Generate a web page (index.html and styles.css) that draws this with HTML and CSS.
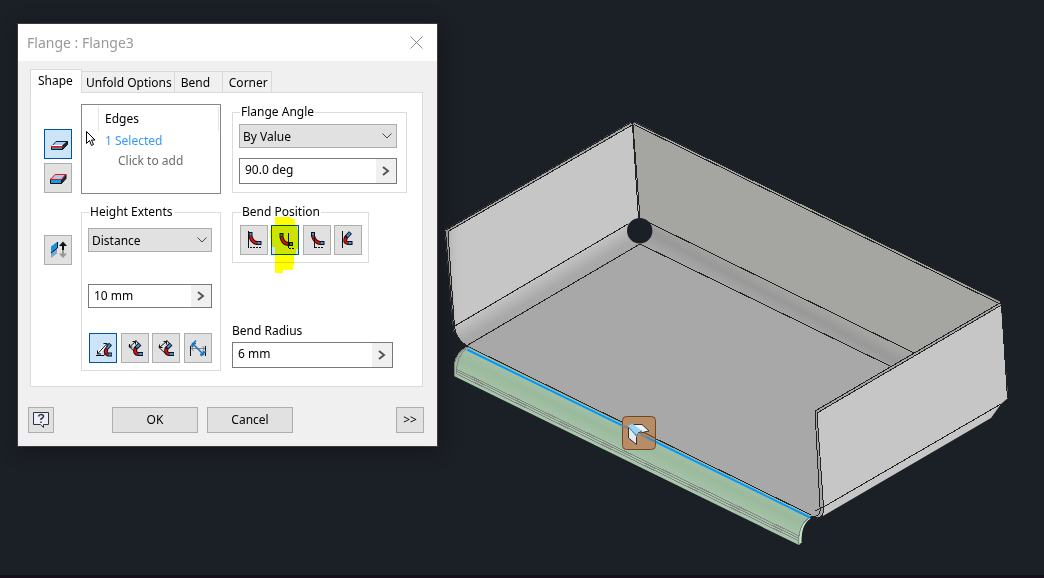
FILE: index.html
```html
<!DOCTYPE html>
<html lang="en">
<head>
  <meta charset="UTF-8">
  <meta name="viewport" content="width=device-width, initial-scale=1.0">
  <title>Flange : Flange3</title>
  <link rel="stylesheet" href="styles.css">
</head>
<body>
  <main class="workspace">

    <!-- sheet metal part -->
    <svg class="model" viewBox="0 0 1044 578" preserveAspectRatio="xMinYMin meet" role="img" aria-label="Sheet metal part">
      <defs>
        <linearGradient id="bendLeft" gradientUnits="userSpaceOnUse" x1="540" y1="274" x2="553" y2="296">
          <stop offset="0" stop-color="#c6c6c6"/>
          <stop offset="0.7" stop-color="#a9a9a9"/>
          <stop offset="1" stop-color="#a8a8a8"/>
        </linearGradient>
        <linearGradient id="bendBack" gradientUnits="userSpaceOnUse" x1="780" y1="287" x2="769" y2="308">
          <stop offset="0" stop-color="#a5a5a2"/>
          <stop offset="0.5" stop-color="#999"/>
          <stop offset="1" stop-color="#a6a6a6"/>
        </linearGradient>
        <linearGradient id="flange" gradientUnits="userSpaceOnUse" x1="640" y1="434" x2="628" y2="459">
          <stop offset="0" stop-color="#a2c0a5"/>
          <stop offset="0.35" stop-color="#9bb99d"/>
          <stop offset="1" stop-color="#a7c7aa"/>
        </linearGradient>
      </defs>

      <!-- floor -->
      <path fill="#a8a8a8" d="M467 346L640 243L892 367L830 403L815 411L821 507L818 518L810 516z"/>
      <!-- back wall and its bend -->
      <path fill="#a5a5a2" d="M633 124L635 122L1001 302L1000 305L914 353L648 222L640 218z"/>
      <path fill="url(#bendBack)" d="M640 218L648 222L914 353L892 367L640 244z"/>
      <!-- left wall and its bend -->
      <path fill="#c6c6c6" d="M445 231L631 122L633 124L640 218L628 224L454 326z"/>
      <path fill="url(#bendLeft)" d="M454 326L628 224L640 218V244L467 346Q455 340 454 326z"/>
      <path fill="#a5a5a5" d="M445 230L631 122L633 124L448 232L455 327Q456 338 467 346Q453 338 453 327z"/>
      <!-- right wall -->
      <path fill="#c6c6c6" d="M816 412L1001 304L1008 398L1001 404L991 418L823 516z"/>
      <path fill="#a5a5a5" d="M815 411L1000 303L1001 305L817 413L823 507V513Q820 519 816 518L810 516L814 515Q820 515 820 507z"/>

      <g class="edge">
        <path d="M446 230L631 122.500L633 124M448 231.500L633 124.500M445.500 231L453.500 327Q454 338 466 346M448 232L454.500 327Q456 339 467 346"/>
        <path d="M635 122.500L1001 301.500L1000 304M634 124.500L999 303.500"/>
        <path d="M454 326.500L628 224M467 345.500L640 244L892 367M648 222L914 353"/>
        <path d="M632.500 125L638.500 218M633 125L640 218"/>
        <path d="M815 411L1000 303M817 413L1001.500 305L1007.500 398M815 411L820 507Q821 515 816 516H810M817 413L823.500 507V512Q822 518 816 518L810 516M815 511L823.500 507L1001 404"/>
        <path d="M467 346L811 515"/>
      </g>
      <circle cx="639.700" cy="230.700" r="12.700" fill="#1b1f26"/>

      <!-- flange preview -->
      <path fill="url(#flange)" d="M468 347L811 516Q800 526 801 543L799 545L454 376V364Q455 354 468 347z"/>
      <path fill="none" stroke="#c5e6c3" stroke-width="2" d="M810 518Q800 524 800.500 543"/>
      <g class="preview-edge">
        <path d="M457 369.500L799 536M457 371.500L799 538.500M457 374L799 541"/>
        <path d="M466 349Q456 357 456.500 374M454.500 376V364Q456 353 467 347M809 518Q798 525 798.500 545"/>
      </g>
      <path class="picked-edge" d="M467 349.500L810 517.500"/>

      <!-- flange marker -->
      <rect x="622.500" y="416.500" width="33" height="33" rx="4" fill="#b68d65" stroke="#744722"/>
      <path stroke="#8b8075" stroke-width="2" d="M622 425.500L630 429M641 434.500L648 438"/>
      <path stroke="#338fd2" stroke-width="2" d="M647 437.500L655 441.500"/>
      <path stroke="#47372b" d="M643 432L655 438"/>
      <path fill="#f4f4f7" stroke="#2c343e" d="M632 424.500H642L649 431L640 433z"/>
      <path fill="#e7e9ef" stroke="#2c343e" d="M628.500 427V438L636.500 444.500V436z"/>
      <path fill="#9dd2ef" d="M628 427Q629 424 633 424L642 431Q637 432 637 437z"/>
      <path stroke="#16629b" fill="none" stroke-dasharray="2 1" d="M628.500 427L637 436Q637 432 642 431"/>
    </svg>

    <section class="dialog" role="dialog" aria-labelledby="dialog-title">
      <header class="titlebar">
        <h1 id="dialog-title">Flange : Flange3</h1>
        <button class="close" aria-label="Close">
          <svg viewBox="0 0 13 13" width="13" height="13"><path d="M.5.5l12 12M12.500.5l-12 12"/></svg>
        </button>
      </header>

      <div class="tabs" role="tablist">
        <button class="tab active" role="tab" aria-selected="true">Shape</button>
        <button class="tab tab-unfold" role="tab">Unfold Options</button>
        <button class="tab" role="tab">Bend</button>
        <button class="tab" role="tab">Corner</button>
      </div>

      <div class="panel" role="tabpanel">
        <div class="modes">
          <button class="tool selected" aria-label="Edge select mode">
            <svg viewBox="1 1 26 28">
              <path fill="#a4cef2" stroke="#15232d" d="M12 12.500H23.500L18.500 17H8z"/>
              <path fill="#169bdc" stroke="#111" d="M7.500 17V20.500H18.500V17z"/>
              <path fill="#142f42" stroke="#111" d="M18.500 17L23.500 12.500V15.500L18.500 20.500z"/>
              <path fill="#fff" d="M8 16H18V17H8z"/>
              <path fill="#f01010" d="M7 17H19V18.500H7z"/>
            </svg>
          </button>
          <button class="tool" aria-label="Face select mode">
            <svg viewBox="1 1 26 28">
              <path fill="#169bdc" stroke="#111" d="M6.500 16V20.500H17.500V16z"/>
              <path fill="#142f42" stroke="#111" d="M17.500 16L22 11.500V15.500L17.500 20.500z"/>
              <path fill="#9fccf0" stroke="#f01010" d="M11 11.500H21.500L17.500 16.500H6.500z"/>
            </svg>
          </button>
          <button class="tool tool-flip" aria-label="Flip direction">
            <svg viewBox="1 1 26 28">
              <path fill="#168ee0" d="M7 11.500L13 7V13.500L7 18z"/>
              <path fill="#76a9cf" d="M7 18L13 13.500V18.500L7 23z"/>
              <path stroke="#111" fill="none" d="M13.500 7V13L7 18"/>
              <path stroke="#111" stroke-width="2" d="M19 8V15"/>
              <path fill="#111" d="M15 11L19 6.500L23 11z"/>
              <path stroke="#969696" stroke-width="2" d="M19 15V21"/>
              <path fill="#969696" d="M15 18.500L19 23L23 18.500z"/>
            </svg>
          </button>
        </div>

        <div class="column">
          <div class="edges">
            <div class="edges-head">Edges</div>
            <div class="edges-row">1 Selected</div>
            <div class="edges-add">Click to add</div>
            <svg class="cursor" viewBox="0 0 10 16" width="10" height="16">
              <path fill="#fff" stroke="#000" d="M.5.500V12.500L3.500 9.500L5.500 14.500L7.500 13.500L5.500 9H9z"/>
            </svg>
          </div>

          <fieldset class="group group-height">
            <legend>Height Extents</legend>
            <div class="select">
              <select aria-label="Height extents">
                <option>Distance</option>
              </select>
              <svg viewBox="0 0 10 6" width="10" height="6"><path d="M.5.500L5 5L9.500.500"/></svg>
            </div>
            <div class="value value-height">
              <input type="text" value="10 mm" aria-label="Distance">
              <button aria-label="Distance options"><svg viewBox="0 0 8 10" width="8" height="10"><path d="M1 1L6 5L1 9"/></svg></button>
            </div>
            <div class="tools">
              <button class="tool selected" aria-label="Outer faces, aligned">
                <svg viewBox="1 1 26 28">
                  <path class="bend-edge" d="M21.500 11L17.500 15.500Q15.500 20.500 19 21.500H23"/>
                  <path class="bend-red" d="M17.500 15.500Q15.500 20.500 19 21.500"/>
                  <path class="bend-blue" d="M21 11.500L18 15M19.500 21.500H22.500"/>
                  <path class="thin" d="M7 22.500H15L17 20"/>
                  <path stroke="#fff" stroke-width="3" d="M10 19.500L17 11.500"/>
                  <path class="thin" d="M8.500 21L18 10.500M8.500 17.500V21H12M14.500 10.500H18V14"/>
                </svg>
              </button>
              <button class="tool" aria-label="Outer faces">
                <svg viewBox="1 1 26 28">
                  <path class="bend-edge" d="M19 11L14.500 15.500Q13 20.500 17 21H22"/>
                  <path class="bend-red" d="M14.500 15.500Q13 20.500 17 21"/>
                  <path class="bend-blue" d="M18.500 11.500L15.500 14.500M17.500 21H21.500"/>
                  <path class="thin" d="M13 18L7.500 13M17 10L14.500 7M8.500 14L14.500 8.500M8.500 11V14H11.500M11.500 8.500H14.500V11.500"/>
                </svg>
              </button>
              <button class="tool" aria-label="Inner faces">
                <svg viewBox="1 1 26 28">
                  <path class="bend-edge" d="M19 11L14.500 15.500Q13 20.500 17 21H22"/>
                  <path class="bend-red" d="M14.500 15.500Q13 20.500 17 21"/>
                  <path class="bend-blue" d="M18.500 11.500L15.500 14.500M17.500 21H21.500"/>
                  <path class="thin" d="M14 21L6.500 14M17 10L14.500 7M7.500 14.500L14.500 8.500M7.500 11.500V14.500H10.500M11.500 8.500H14.500V11.500"/>
                </svg>
              </button>
              <button class="tool" aria-label="Parallel to flange">
                <svg viewBox="1 1 26 28">
                  <path class="thin" d="M6.500 13V23M21.500 13V23"/>
                  <path fill="none" stroke="#858585" d="M7 15.500H21M9.500 13L7.500 15.500L9.500 18M18.500 13L20.500 15.500L18.500 18"/>
                  <path fill="none" stroke="#1673bd" stroke-width="1.500" d="M9 11L19 21M8.500 14V10.500H12M16 21.500H19.500V18M7 13L12 7.500M17 23L22 18"/>
                </svg>
              </button>
            </div>
          </fieldset>
        </div>

        <div class="column column-right">
          <fieldset class="group group-angle">
            <legend>Flange Angle</legend>
            <div class="select">
              <select aria-label="Flange angle type">
                <option>By Value</option>
              </select>
              <svg viewBox="0 0 10 6" width="10" height="6"><path d="M.5.500L5 5L9.500.500"/></svg>
            </div>
            <div class="value value-tall">
              <input type="text" value="90.0 deg" aria-label="Flange angle">
              <button aria-label="Angle options"><svg viewBox="0 0 8 10" width="8" height="10"><path d="M1 1L6 5L1 9"/></svg></button>
            </div>
          </fieldset>

          <fieldset class="group group-bend">
            <legend>Bend Position</legend>
            <div class="tools">
              <button class="tool" aria-label="Inside of base face">
                <svg viewBox="1 1 26 28">
                  <path class="bend-edge" d="M10.500 7V11Q12 17.500 17 18H21.500"/>
                  <path class="bend-red" d="M10.500 11Q12 17.500 17 18"/>
                  <path class="bend-blue" d="M10.500 8V10.500M17.500 18H20.500"/>
                  <path class="thin" d="M8.500 6V23"/>
                  <path class="dash" d="M10 22.500H21"/>
                </svg>
              </button>
              <div class="marked">
                <button class="tool selected" aria-label="Bend from adjacent face">
                  <svg viewBox="1 1 26 28">
                    <path class="bend-edge" d="M10.500 8V12Q12 18.500 17 19H22"/>
                    <path class="bend-red" d="M10.500 12Q12 18.500 17 19"/>
                    <path class="bend-blue" d="M10.500 9V11.500M19 19H21"/>
                    <path class="thin" d="M17.500 8V23"/>
                    <path class="dash" d="M18 23.500H23"/>
                  </svg>
                </button>
                <!-- yellow marker stroke -->
                <svg class="highlight" viewBox="0 0 30 58" width="30" height="58">
                  <path fill="#ff0" d="M5 1H21V3H25V10H27V14H28V33H26V39H24V50H23V54H13V57H5V38L5 31H1V23L0 22V14H1V10H5z"/>
                </svg>
              </div>
              <button class="tool" aria-label="Outside of base face">
                <svg viewBox="1 1 26 28">
                  <path class="bend-edge" d="M10 7V11Q12 17.500 17 18H21.500"/>
                  <path class="bend-red" d="M10 11Q12 17.500 17 18"/>
                  <path class="bend-blue" d="M10 8V10.500M17.500 18H20.500"/>
                  <path class="thin" d="M11.500 12V23"/>
                  <path class="dash" d="M12 22.500H21"/>
                </svg>
              </button>
              <button class="tool" aria-label="Tangent to side face">
                <svg viewBox="1 1 26 28">
                  <path class="bend-edge" d="M16.500 7.500L12 12.500Q9.500 17.500 14 18H18.500"/>
                  <path class="bend-red" d="M12 12.500Q9.500 17.500 14 18"/>
                  <path class="bend-blue" d="M16 8L13 11.500M14.500 18H17.500"/>
                  <path class="thin" d="M8.500 6V23"/>
                </svg>
              </button>
            </div>
          </fieldset>

          <div class="radius">
            <label for="bend-radius">Bend Radius</label>
            <div class="value value-tall">
              <input type="text" id="bend-radius" value="6 mm">
              <button aria-label="Radius options"><svg viewBox="0 0 8 10" width="8" height="10"><path d="M1 1L6 5L1 9"/></svg></button>
            </div>
          </div>
        </div>
      </div>

      <footer class="actions">
        <button class="btn btn-help" aria-label="Help">
          <svg viewBox="0 0 18 18" width="18" height="18">
            <path fill="#edeef8" stroke="#30343d" d="M1.500 1.500H16.500V13.500H11.500V16.500L8.500 13.500H1.500z"/>
            <path fill="none" stroke="#30343d" stroke-width="1.500" d="M6.500 5.500Q7 3.500 9 3.500Q11.500 3.500 11.500 5.500Q11.500 6.500 9 8V9M9 10.500V12"/>
          </svg>
        </button>
        <button class="btn btn-ok">OK</button>
        <button class="btn">Cancel</button>
        <button class="btn btn-more">&gt;&gt;</button>
      </footer>
    </section>
  </main>
</body>
</html>
```

FILE: styles.css
```css
* {
  box-sizing: border-box;
}

body {
  margin: 0;
  background: #1b1f26;
}

body, button, input, select {
  font-family: "Noto Sans", "DejaVu Sans Condensed", sans-serif;
  font-size: 12px;
  line-height: 16px;
  color: #000;
}

button {
  padding: 0;
  border: 1px solid #adadad;
  border-radius: 0;
  background: #e1e1e1;
}

.workspace {
  position: relative;
  min-height: 100vh;
  border-bottom: 3px solid #170f1b;
}

/* 3D view */
.model {
  position: absolute;
  top: 0;
  left: 0;
  width: 100%;
}

.edge {
  fill: none;
  stroke: #222;
  stroke-width: 1;
  shape-rendering: crispEdges;
}

.preview-edge {
  fill: none;
  stroke: #858585;
  shape-rendering: crispEdges;
}

.picked-edge {
  stroke: #0098ff;
  stroke-width: 2;
}

/* dialog window */
.dialog {
  position: absolute;
  top: 24px;
  left: 18px;
  width: 419px;
  background: #f0f0f0;
  box-shadow: 0 0 0 1px #383b3e, 2px 4px 16px rgba(20, 20, 20, 0.8);
}

.titlebar {
  display: flex;
  align-items: center;
  justify-content: space-between;
  height: 37px;
  padding: 0 14px 0 9px;
  background: #fff;
}

.titlebar h1 {
  margin: 0;
  font-size: 14px;
  font-weight: normal;
  color: #999;
}

.close {
  display: flex;
  border: 0;
  background: none;
}

.close svg {
  fill: none;
  stroke: #8a8a8a;
}

/* tabs */
.tabs {
  display: flex;
  align-items: flex-end;
  padding: 8px 12px 0;
}

.tab {
  min-width: 48px;
  height: 21px;
  padding: 1px 3px 0 6px;
  border: 1px solid #d9d9d9;
  border-width: 1px 1px 0 0;
  background: #f0f0f0;
  text-align: left;
}

.tab-unfold {
  padding: 1px 2px 0 4px;
}

.tab.active {
  position: relative;
  min-width: 52px;
  height: 24px;
  margin-bottom: -1px;
  padding: 0 7px 2px;
  border-left-width: 1px;
  background: #fff;
}

.panel {
  display: flex;
  margin: 0 14px 0 12px;
  padding: 11px 15px 15px 13px;
  border: 1px solid #dcdcdc;
  background: #fff;
}

.modes {
  display: flex;
  flex-direction: column;
  gap: 4px;
  margin: 25px 9px 0 0;
}

.tool-flip {
  margin-top: 38px;
}

.column {
  display: flex;
  flex-direction: column;
  gap: 10px;
  width: 140px;
}

.column-right {
  flex: 1;
  gap: 11px;
  align-items: flex-start;
  margin-left: 11px;
}

/* edge list */
.edges {
  position: relative;
  height: 90px;
  padding: 2px 1px;
  border: 1px solid #828790;
}

.edges-head {
  margin-left: 15px;
  padding: 4px 6px;
  border: 1px solid #e5e5e5;
  border-width: 0 1px;
}

.edges-row {
  margin-top: 2px;
  padding-left: 22px;
  color: #3399ff;
}

.edges-add {
  margin-top: 4px;
  padding-left: 35px;
  color: #6d6d6d;
}

.cursor {
  position: absolute;
  top: 26px;
  left: 4px;
}

/* group boxes */
.group {
  min-width: 0;
  margin: 0;
  padding: 8px 8px 7px 6px;
  border: 1px solid #dcdcdc;
}

.group legend {
  margin-left: 1px;
  padding: 0 1px;
}

.group-angle {
  align-self: stretch;
  padding: 4px 9px 8px 6px;
}

.group-bend {
  width: 137px;
  padding: 5px 6px 7px 7px;
}

.select {
  position: relative;
}

.select select {
  display: block;
  width: 100%;
  height: 24px;
  padding: 1px 20px 0 3px;
  border: 1px solid #adadad;
  border-radius: 0;
  background: #e1e1e1;
  appearance: none;
}

.select svg {
  position: absolute;
  top: 9px;
  right: 5px;
  fill: none;
  stroke: #444;
}

.value {
  display: flex;
  height: 24px;
  border: 1px solid #7a7a7a;
  background: #fff;
}

.value input {
  flex: 1;
  min-width: 0;
  padding: 0 5px;
  border: 0;
  background: none;
}

.value button {
  display: flex;
  align-items: center;
  justify-content: center;
  width: 20px;
  border: 0;
  background: #f0f0f0;
}

.value svg {
  fill: none;
  stroke: #555;
  stroke-width: 2;
}

.value-tall {
  height: 26px;
}

.value-tall input {
  padding-bottom: 2px;
}

.group-height .value {
  margin: 32px 0 25px;
}

.group-angle .value {
  margin-top: 10px;
}

/* icon buttons */
.tools {
  display: flex;
  justify-content: space-between;
}

.group-height .tools {
  padding-left: 1px;
}

.tool {
  display: block;
  width: 28px;
  height: 30px;
}

.tool svg {
  display: block;
  width: 26px;
  height: 28px;
}

.tool.selected {
  border-color: #005499;
  background: #cce4f7;
}

.thin, .dash, .bend-edge, .bend-red, .bend-blue {
  fill: none;
  stroke: #111;
}

.dash {
  stroke-dasharray: 2 1;
}

.bend-edge {
  stroke-width: 4;
}

.bend-red {
  stroke: #e80c12;
  stroke-width: 2;
}

.bend-blue {
  stroke: #3c91e6;
  stroke-width: 2;
}

.marked {
  position: relative;
}

.highlight {
  position: absolute;
  top: -9px;
  left: -1px;
  mix-blend-mode: multiply;
  pointer-events: none;
}

.radius {
  width: 161px;
  margin-top: 49px;
}

.radius label {
  display: block;
  margin-bottom: 3px;
}

/* bottom buttons */
.actions {
  display: flex;
  gap: 9px;
  padding: 20px 13px 13px 10px;
}

.btn {
  width: 86px;
  height: 26px;
}

.btn-help {
  display: flex;
  align-items: center;
  justify-content: center;
  width: 26px;
}

.btn-ok {
  margin-left: 49px;
}

.btn-more {
  width: 28px;
  margin-left: auto;
}
```
